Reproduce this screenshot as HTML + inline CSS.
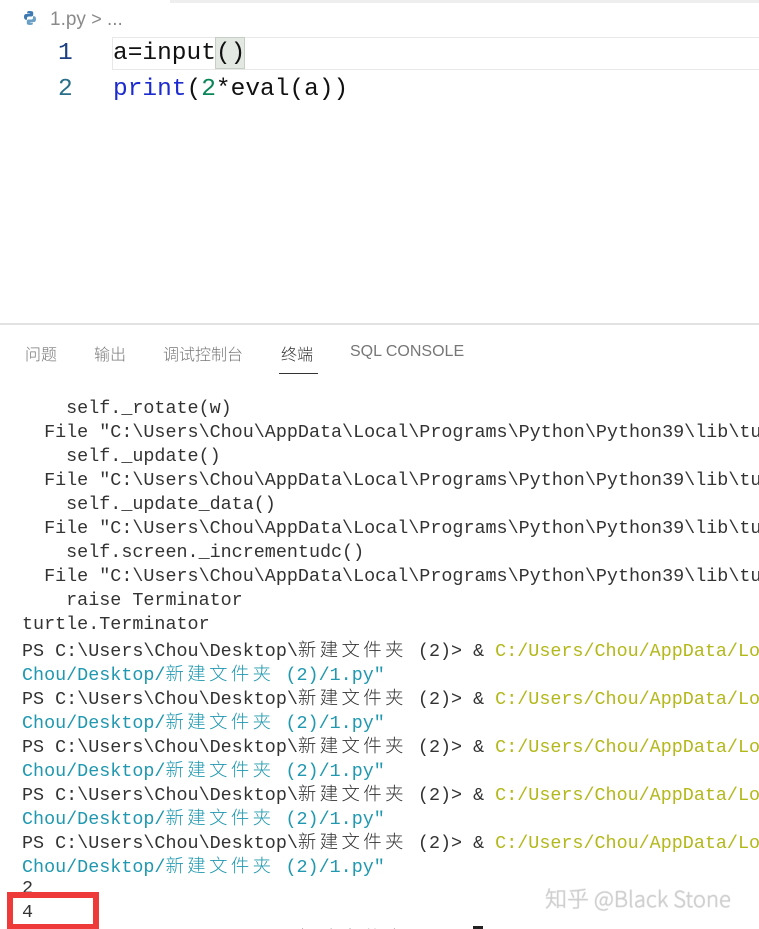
<!DOCTYPE html>
<html><head><meta charset="utf-8">
<style>
html,body{margin:0;padding:0;width:759px;height:929px;overflow:hidden;background:#fff;position:relative;font-family:"Liberation Sans","Noto Sans CJK SC",sans-serif;}
.abs{position:absolute;white-space:pre;}
.code{font-family:"Liberation Mono","Noto Sans CJK SC",monospace;font-size:24.5px;line-height:36px;}
.term{position:absolute;left:22px;top:397px;font-family:"Liberation Mono","Noto Sans CJK SC",monospace;font-size:18.4px;line-height:24px;color:#333;}
.term div{height:24px;white-space:pre;}
.cj{letter-spacing:3.4px;font-family:"Noto Sans CJK SC",sans-serif;font-weight:300;}
.y{color:#b3b81b;}
.c{color:#1f98b0;}
.tab{position:absolute;top:341px;font-size:16px;color:#777;font-family:'Noto Sans CJK SC',sans-serif;font-weight:300;white-space:pre;}
</style></head><body>
<div style="position:absolute;left:170px;top:0;width:589px;height:3px;background:#eee;"></div>
<svg class="abs" style="left:22px;top:10px" width="16" height="16" viewBox="0 0 16 16">
<path d="M7.8 1C5 1 5.2 2.2 5.2 2.2V3.5h2.7V4H4.1S2 3.8 2 6.8 3.8 9.7 3.8 9.7H5V8.3S4.9 6.5 6.8 6.5h2.6s1.8 0 1.8-1.7V2.6S11.5 1 7.8 1z" fill="#3d7ab3"/>
<path d="M8.2 15c2.8 0 2.6-1.2 2.6-1.2v-1.3H8.1V12h3.8s2.1.2 2.1-2.8-1.8-2.9-1.8-2.9H11v1.4s.1 1.8-1.8 1.8H6.6s-1.8 0-1.8 1.7v2.2S4.5 15 8.2 15z" fill="#6a9fc6"/>
</svg>
<div class="abs" style="left:50px;top:8px;font-size:19px;color:#8a8a8a;line-height:22px;">1.py <span style="font-size:18px">&gt;</span> ...</div>
<div style="position:absolute;left:112px;top:37px;width:647px;height:31px;border:1px solid #e8e8e8;border-right:none;"></div>
<div style="position:absolute;left:215px;top:37px;width:30px;height:32px;background:#e3e8e2;border:1px solid #c6cfc6;box-sizing:border-box;"></div>
<div class="abs code" style="left:58px;top:36px;color:#1b3f80;">1</div>
<div class="abs code" style="left:58px;top:72px;color:#2a6f8a;">2</div>
<div class="abs code" style="left:113px;top:36px;color:#111;">a=input()</div>
<div class="abs code" style="left:113px;top:72px;color:#111;"><span style="color:#1c2bd0">print</span>(<span style="color:#098658">2</span>*eval(a))</div>
<div style="position:absolute;left:0;top:323px;width:759px;height:2px;background:#e2e2e2;"></div>
<div class="tab" style="left:25px;">问题</div>
<div class="tab" style="left:94px;">输出</div>
<div class="tab" style="left:163px;">调试控制台</div>
<div class="tab" style="left:281px;color:#333;">终端</div>
<div class="tab" style="left:350px;top:343px;font-family:'Liberation Sans',sans-serif;font-size:16px;">SQL CONSOLE</div>
<div style="position:absolute;left:279px;top:373px;width:39px;height:1px;background:#333;"></div>
<div class="term"><div>    self._rotate(w)</div><div>  File "C:\Users\Chou\AppData\Local\Programs\Python\Python39\lib\tu</div><div>    self._update()</div><div>  File "C:\Users\Chou\AppData\Local\Programs\Python\Python39\lib\tu</div><div>    self._update_data()</div><div>  File "C:\Users\Chou\AppData\Local\Programs\Python\Python39\lib\tu</div><div>    self.screen._incrementudc()</div><div>  File "C:\Users\Chou\AppData\Local\Programs\Python\Python39\lib\tu</div><div>    raise Terminator</div><div>turtle.Terminator</div><div>PS C:\Users\Chou\Desktop\<span class="cj">新建文件夹</span> (2)&gt; &amp; <span class="y">C:/Users/Chou/AppData/Lo</span></div><div class="c">Chou/Desktop/<span class="cj">新建文件夹</span> (2)/1.py"</div><div>PS C:\Users\Chou\Desktop\<span class="cj">新建文件夹</span> (2)&gt; &amp; <span class="y">C:/Users/Chou/AppData/Lo</span></div><div class="c">Chou/Desktop/<span class="cj">新建文件夹</span> (2)/1.py"</div><div>PS C:\Users\Chou\Desktop\<span class="cj">新建文件夹</span> (2)&gt; &amp; <span class="y">C:/Users/Chou/AppData/Lo</span></div><div class="c">Chou/Desktop/<span class="cj">新建文件夹</span> (2)/1.py"</div><div>PS C:\Users\Chou\Desktop\<span class="cj">新建文件夹</span> (2)&gt; &amp; <span class="y">C:/Users/Chou/AppData/Lo</span></div><div class="c">Chou/Desktop/<span class="cj">新建文件夹</span> (2)/1.py"</div><div>PS C:\Users\Chou\Desktop\<span class="cj">新建文件夹</span> (2)&gt; &amp; <span class="y">C:/Users/Chou/AppData/Lo</span></div><div class="c">Chou/Desktop/<span class="cj">新建文件夹</span> (2)/1.py"</div><div>2</div><div>4</div><div>PS C:\Users\Chou\Desktop\<span class="cj">新建文件夹</span> (2)&gt; <span style="display:inline-block;width:10px;height:22px;background:#222;vertical-align:-4px"></span></div></div>
<div style="position:absolute;left:7px;top:892px;width:80px;height:26px;border:6px solid #ef3a3a;"></div>
<div class="abs" style="left:545px;top:883px;font-size:22px;color:#d0d0d0;text-shadow:0 0 1px #aaa;font-family:'Noto Sans CJK SC',sans-serif;font-weight:300;line-height:30px;">知乎 @Black Stone</div>
</body></html>
